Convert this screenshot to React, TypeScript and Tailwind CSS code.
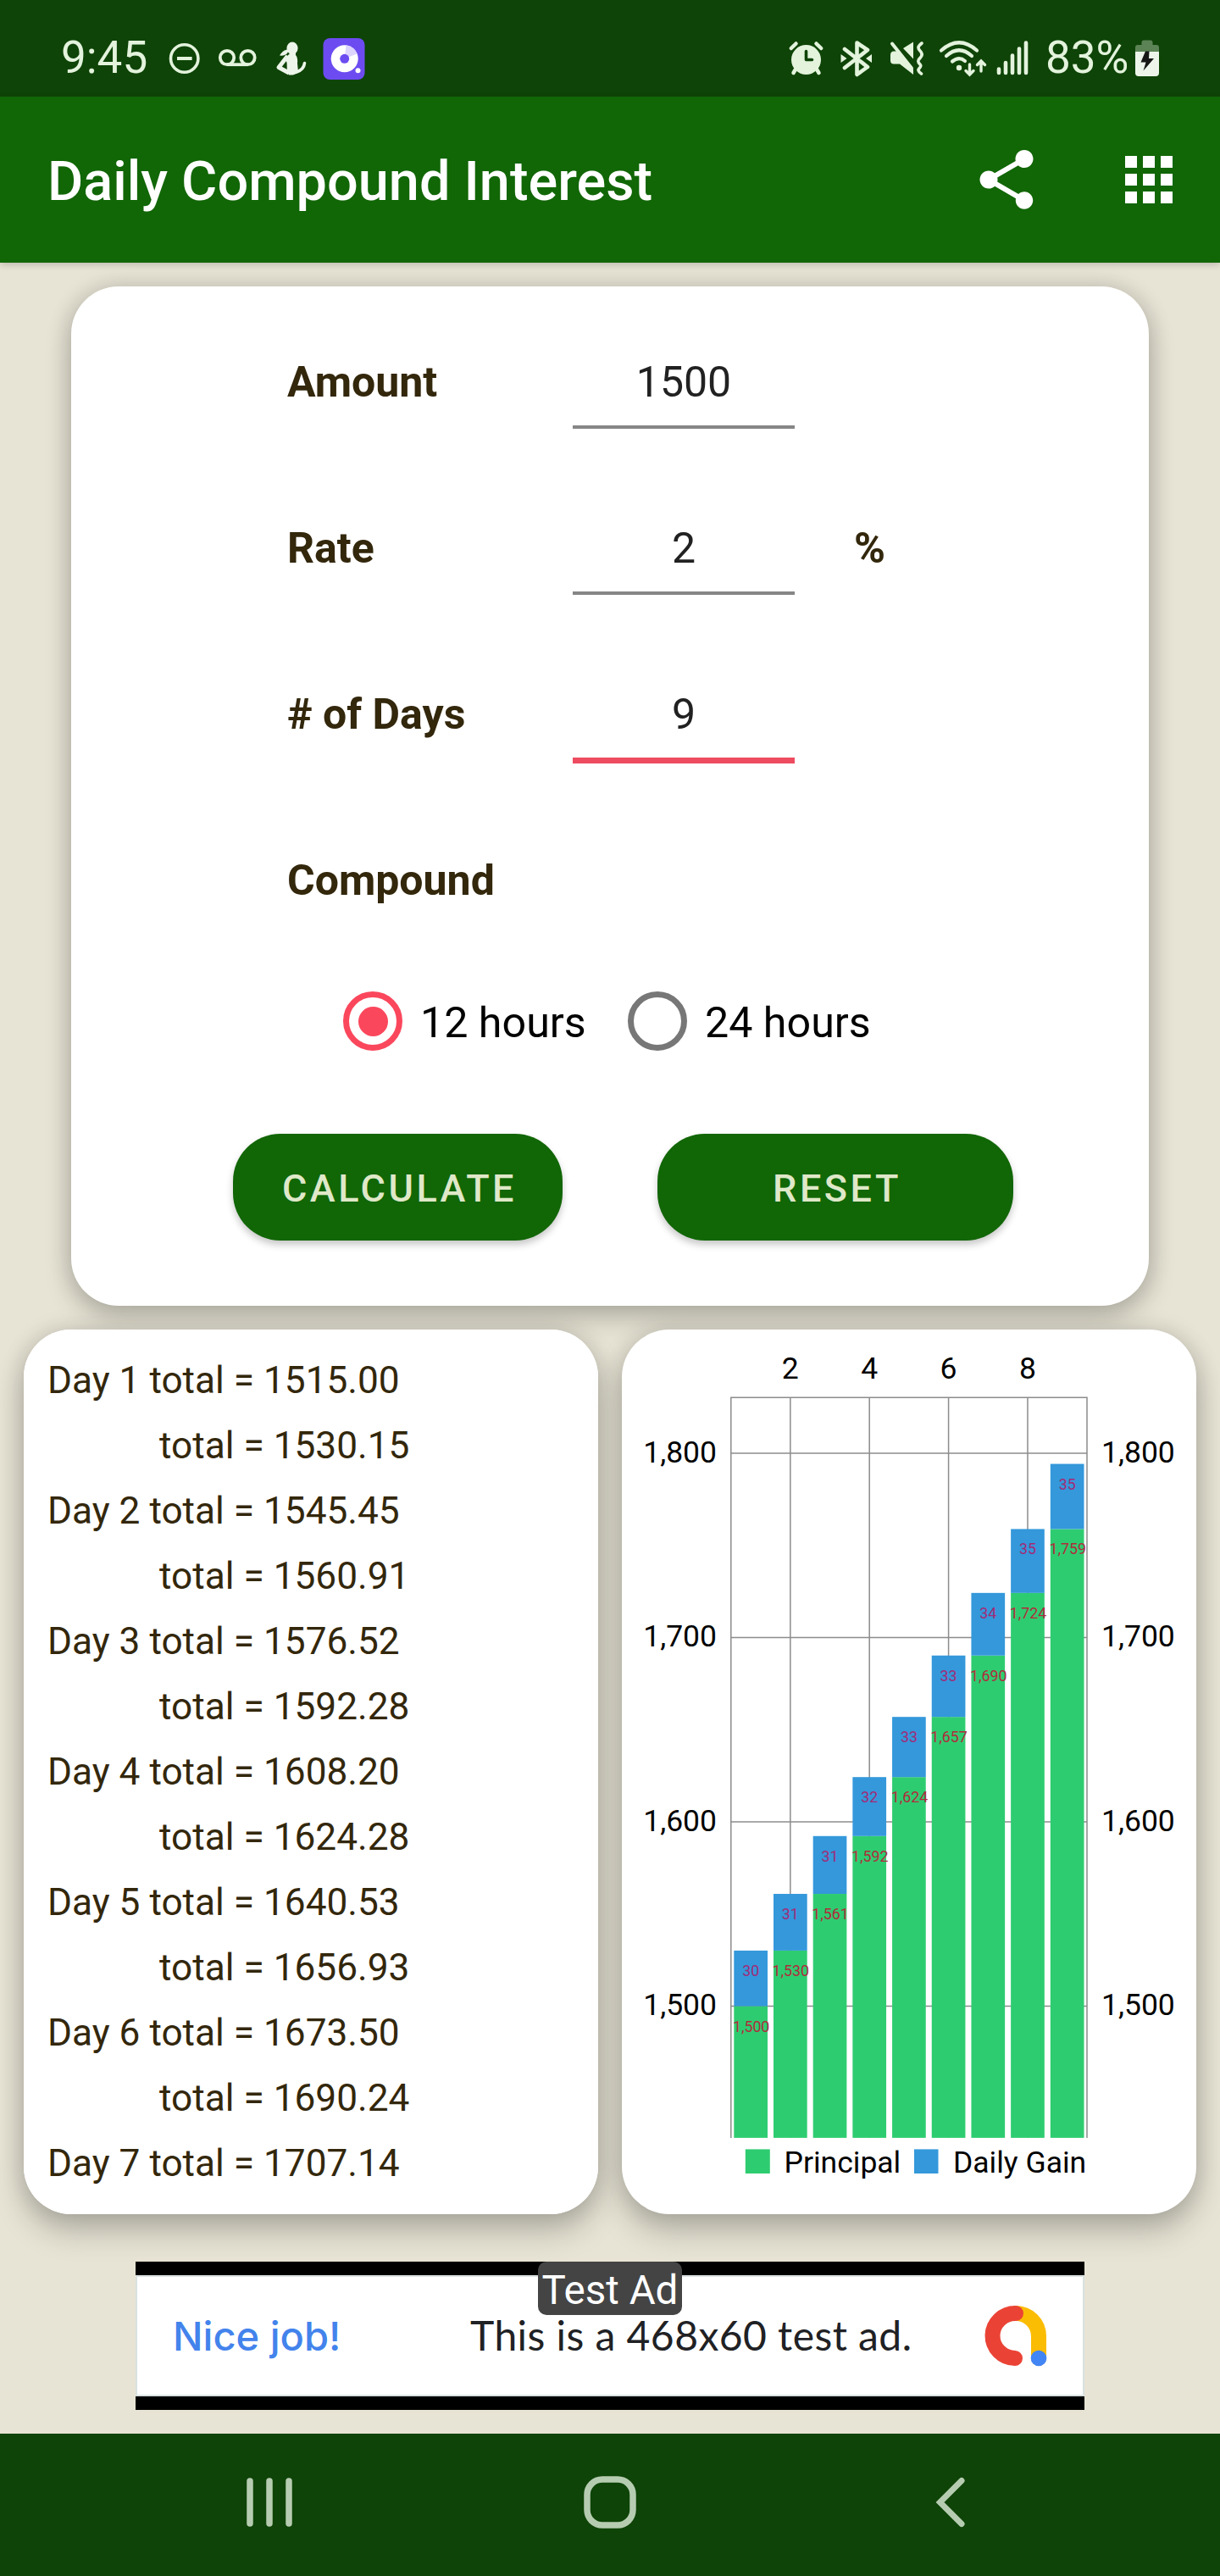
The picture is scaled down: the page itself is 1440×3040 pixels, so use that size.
import { MdApps, MdShare } from "react-icons/md";

const fields = [
  { label: "Amount", value: "1500", suffix: "", active: false },
  { label: "Rate", value: "2", suffix: "%", active: false },
  { label: "# of Days", value: "9", suffix: "", active: true },
];

const totals = [
  { day: 1, half: "1515.00", full: "1530.15" },
  { day: 2, half: "1545.45", full: "1560.91" },
  { day: 3, half: "1576.52", full: "1592.28" },
  { day: 4, half: "1608.20", full: "1624.28" },
  { day: 5, half: "1640.53", full: "1656.93" },
  { day: 6, half: "1673.50", full: "1690.24" },
  { day: 7, half: "1707.14", full: "" },
];

const bars = [
  { principal: 1500, gain: 30.15 },
  { principal: 1530.15, gain: 30.76 },
  { principal: 1560.91, gain: 31.37 },
  { principal: 1592.28, gain: 32.0 },
  { principal: 1624.28, gain: 32.65 },
  { principal: 1656.93, gain: 33.31 },
  { principal: 1690.24, gain: 33.97 },
  { principal: 1724.21, gain: 34.66 },
  { principal: 1758.87, gain: 35.35 },
];

/* Chart geometry */
const LEFT = 128.8;
const RIGHT = 549;
const TOP = 80.3;
const BOTTOM = 953.9;
const STEP = (RIGHT - LEFT) / bars.length;
const y = (value: number) => 798.5 - (value - 1500) * 2.175;
const fmt = (value: number) => Math.round(value).toLocaleString("en-US");

function StatusBar() {
  return (
    <div className="flex h-[114px] shrink-0 items-center justify-between bg-[#0e4407] px-[72px] pt-[22px] text-[53px] leading-none text-[#e3f3dc]">
      <div className="flex items-center">
        <span className="w-[127px]">9:45</span>
        {/* Do not disturb */}
        <svg width="38" height="60" viewBox="0 0 38 60" fill="none" stroke="currentColor">
          <circle cx="18.7" cy="31" r="16.2" strokeWidth="3.6" />
          <path d="M10 31H27.6" strokeWidth="4" />
        </svg>
        {/* Voicemail */}
        <svg className="ml-5" width="47" height="60" viewBox="0 0 47 60" fill="none" stroke="currentColor" strokeWidth="3.8">
          <circle cx="11" cy="30" r="8.2" />
          <circle cx="35.5" cy="30" r="8.2" />
          <path d="M11 38.2H35.5" />
        </svg>
        {/* Fitness app */}
        <svg className="ml-[21px]" width="38" height="60" viewBox="0 0 38 60" fill="#edf5ea">
          <ellipse cx="20" cy="18.8" rx="6.6" ry="7.2" />
          <path d="M17 20.5C11 20 8.5 22 5 27.5C9 28 12 27 13.5 25.5Z" />
          <path d="M16.5 22H24V27C26 29 26.5 33 26 37L27 47C24 50.5 20 50.8 16 50.5C13 47 14 40 13.5 36C12 32 13 28 16.500 26Z" />
          <path d="M14.5 28L4 41.5L16 48" fill="none" stroke="#edf5ea" strokeWidth="5" strokeLinejoin="round" />
          <path d="M25 47C31 45 34 41 34.5 36.5" fill="none" stroke="#edf5ea" strokeWidth="3.6" strokeLinecap="round" />
        </svg>
        {/* Music app */}
        <svg className="ml-[18px]" width="50" height="60" viewBox="0 0 50 60">
          <rect x="0.5" y="7" width="49" height="49" rx="8" fill="#6c4cf1" />
          <circle cx="25.7" cy="31.3" r="16" fill="#fff" />
          <path d="M25.7 31.3L27.5 15.4A16 16 0 0 1 40.5 25.5Z" fill="#ddd4ff" />
          <circle cx="25.7" cy="31.3" r="5.5" fill="#6c4cf1" />
          <circle cx="41.5" cy="45.3" r="3" fill="#fff" />
        </svg>
      </div>

      <div className="flex items-center">
        {/* Alarm */}
        <svg width="43" height="60" viewBox="0 0 43 60" fill="none" stroke="currentColor" strokeWidth="4.5" strokeLinecap="round">
          <path d="M3.8 19L9.500 13.5M39.2 19L33.5 13.5M9.5 43L6.5 48M33.5 43L36.5 48" />
          <circle cx="21.5" cy="32.5" r="17.5" fill="currentColor" stroke="none" />
          <path d="M21.5 22.5V32.5H28.5" stroke="#0e4407" strokeWidth="3.6" strokeLinejoin="round" />
        </svg>
        {/* Bluetooth */}
        <svg className="ml-[18px]" width="39" height="60" viewBox="0 0 39 60" fill="none" stroke="currentColor" strokeWidth="4.6" strokeLinecap="round" strokeLinejoin="round">
          <path d="M6 20L33 41L20.5 50V12.5L33 21L6 42" />
          <path d="M1.5 26L8.5 31L1.5 36ZM38 26L31 31L38 36Z" fill="currentColor" stroke="none" />
        </svg>
        {/* Muted, vibrating */}
        <svg className="ml-[19px]" width="41" height="60" viewBox="0 0 41 60" fill="none" stroke="currentColor" strokeWidth="4" strokeLinecap="round">
          <path d="M17 19L29 11.5V31.5ZM6 22.5H11L29 44V50L13 37.5H6Q2 37.5 2 33.5V27Q2 22.5 6 22.5Z" fill="currentColor" stroke="none" />
          <path d="M4 13.500L27 42.5" />
          <path d="M39 13C34 17 34 19 37 22C40 25 39.5 28 37 30.500C34 33 34 35 37 38C40 41 34 43 35 45C35.5 47 37 48 38.5 49" strokeWidth="3.6" />
        </svg>
        {/* Wi-Fi */}
        <svg className="ml-[18px]" width="57" height="60" viewBox="0 0 57 60" fill="none" stroke="currentColor" strokeWidth="4.2" strokeLinecap="round">
          <path d="M3 21.5Q24 3 45 21.5M9 28Q24 14.5 39 28M16 34.5Q24 28 31 34" />
          <circle cx="24" cy="42" r="3.2" fill="currentColor" stroke="none" />
          <path d="M36.5 38V49M32 45.5L36.5 50L41 45.5M50 46V35M45.5 38.5L50 34L54.5 38.5" strokeWidth="3.4" />
        </svg>
        {/* Signal */}
        <svg className="ml-[11px]" width="38" height="60" viewBox="0 0 38 60" stroke="currentColor" strokeWidth="4.6" strokeLinecap="round">
          <path d="M3 43.5V48M11 36V48M19 27.5V48M27 19.5V48M35 12.5V48" />
        </svg>
        <span className="ml-5 w-[106px]">83%</span>
        {/* Battery */}
        <svg width="28" height="60" viewBox="0 0 28 60">
          <path d="M7.5 12Q7.5 9.5 10 9.5H18Q20.5 9.5 20.5 12V15H25Q28 15 28 18V24H0V18Q0 15 3 15H7.5Z" fill="#5c8356" />
          <path d="M0 23H28V48Q28 52 24 52H4Q0 52 0 48Z" fill="#edf5ea" />
          <path d="M16.5 22.5H12L6.5 35.5H12.5L9.5 45.500L22 31H16Z" fill="#161616" />
        </svg>
      </div>
    </div>
  );
}

function AppBar() {
  return (
    <header className="flex h-[196px] shrink-0 items-center bg-[#116606] pl-[56px] text-white shadow-[0_2px_8px_rgba(0,0,0,0.2)]">
      <h1 className="pt-[4px] text-[64.8px] leading-none font-medium">Daily Compound Interest</h1>
      <MdShare className="ml-auto size-[84px]" />
      <MdApps className="ml-[84px] mr-[42px] size-[84px]" />
    </header>
  );
}

function Radio({ label, checked }: { label: string; checked: boolean }) {
  return (
    <div className="flex w-[336px] items-center gap-[21px]">
      <div
        className={
          checked
            ? "flex size-[70px] items-center justify-center rounded-full border-[7px] border-[#fb475c]"
            : "size-[70px] rounded-full border-[7px] border-[#777777]"
        }>
        {checked && <div className="size-[35px] rounded-full bg-[#fb475c]" />}
      </div>
      <span className="pt-[4px] text-[50.2px] leading-none text-black">{label}</span>
    </div>
  );
}

function FormCard() {
  return (
    <section className="mx-[84px] mt-7 h-[1203px] shrink-0 rounded-[56px] bg-white pt-[15px] shadow-[0_14px_32px_rgba(0,0,0,0.2),0_0_28px_rgba(0,0,0,0.14)]">
      {fields.map((field) => (
        <div key={field.label} className="flex h-[196px] items-center pl-[255px] text-[50px] leading-none">
          <span className="w-[337px] font-bold text-[#33270c]">{field.label}</span>
          <div
            className={
              field.active
                ? "flex h-[116px] w-[262px] items-center justify-center border-b-[7px] border-[#ee4b60] pt-[7px] text-[#212121]"
                : "flex h-[109px] w-[262px] items-center justify-center border-b-[4px] border-[#868686] pt-[4px] text-[#212121]"
            }>
            {field.value}
          </div>
          <span className="ml-[70px] font-bold text-[#33270c]">{field.suffix}</span>
        </div>
      ))}
      <div className="flex h-[196px] items-center pl-[255px] text-[50px] leading-none font-bold text-[#33270c]">
        Compound
      </div>

      <div className="flex h-[136px] items-center pl-[321px]">
        <Radio label="12 hours" checked />
        <Radio label="24 hours" checked={false} />
      </div>

      {/* Actions */}
      <div className="mt-[65px] flex gap-28 pl-[191px] text-[45px] leading-none font-medium tracking-[3.5px] text-[#dfe8c8]">
        <button className="h-[126px] w-[389px] rounded-[56px] bg-[#116606] pt-[3px] pl-[4px] shadow-[0_5px_9px_rgba(0,0,0,0.22)]">
          CALCULATE
        </button>
        <button className="h-[126px] w-[420px] rounded-[56px] bg-[#116606] pt-[3px] pl-[4px] shadow-[0_5px_9px_rgba(0,0,0,0.22)]">
          RESET
        </button>
      </div>
    </section>
  );
}

function TotalsCard() {
  return (
    <section className="h-[1044px] w-[678px] overflow-hidden rounded-[56px] bg-white pt-[22px] pl-7 text-[44.2px] leading-[77px] text-[#33270c]">
      {totals.map((row) => (
        <div key={row.day}>
          <p>Day {row.day} total = {row.half}</p>
          {row.full && <p className="pl-[132px]">total = {row.full}</p>}
        </div>
      ))}
    </section>
  );
}

function ChartCard() {
  return (
    <svg width="678" height="1044" viewBox="0 0 678 1044" fontSize="35.5">
      {/* Grid */}
      <g stroke="#8c8c8c" strokeWidth="1.5" fill="none">
        <path d={`M${LEFT} ${BOTTOM}V${TOP}H${RIGHT}V${BOTTOM}`} />
        {[1500, 1600, 1700, 1800].map((v) => (
          <path key={v} d={`M${LEFT} ${y(v)}H${RIGHT}`} />
        ))}
        {[2, 4, 6, 8].map((n) => (
          <path key={n} d={`M${LEFT + (n - 0.5) * STEP} ${TOP}V${BOTTOM}`} />
        ))}
      </g>

      {/* Axis labels */}
      {[2, 4, 6, 8].map((n) => (
        <text key={n} x={LEFT + (n - 0.5) * STEP} y="58" textAnchor="middle">{n}</text>
      ))}
      {[1500, 1600, 1700, 1800].map((v) => (
        <g key={v}>
          <text x="112" y={y(v) + 10.5} textAnchor="end">{fmt(v)}</text>
          <text x="566" y={y(v) + 10.5}>{fmt(v)}</text>
        </g>
      ))}

      {/* Stacked bars */}
      {bars.map((bar, i) => {
        const x = LEFT + i * STEP + STEP * 0.075;
        const mid = y(bar.principal);
        const top = y(bar.principal + bar.gain);
        return (
          <g key={i} fontSize="17.8" textAnchor="middle">
            <rect x={x} y={mid} width={STEP * 0.85} height={BOTTOM - mid} fill="#2ecc71" />
            <rect x={x} y={top} width={STEP * 0.85} height={mid - top} fill="#3498db" />
            <text x={x + STEP * 0.425} y={top + 30} fill="#a02c78">{fmt(bar.gain)}</text>
            <text x={x + STEP * 0.425 + 0.5} y={mid + 30} fill="#b02c3c">{fmt(bar.principal)}</text>
          </g>
        );
      })}

      {/* Legend */}
      <rect x="145.8" y="967.4" width="29" height="28.6" fill="#2ecc71" />
      <text x="191.5" y="995">Principal</text>
      <rect x="345" y="967.4" width="28.5" height="28.6" fill="#3498db" />
      <text x="391" y="995">Daily Gain</text>
    </svg>
  );
}

function AdBanner() {
  return (
    <div className="relative mx-auto mt-14 h-[175px] w-[1120px] shrink-0 bg-black py-4">
      <div className="flex h-[143px] items-center border-2 border-[#dae2e1] bg-white pl-[42px] leading-none">
        <span className="w-[351px] text-[47px] font-medium font-['Inter'] text-[#4383ec]">Nice job!</span>
        <span className="w-[606px] pb-[2px] text-[48px] tracking-[0.45px] font-['Lato'] text-[#202124]">
          This is a 468x60 test ad.
        </span>
        <svg width="76" height="78" viewBox="0 0 76 78" fill="none" strokeWidth="18" strokeLinecap="round">
          <path d="M38 12A27 27 0 0 1 65 39V65" stroke="#fbbc04" />
          <path d="M38 12A27 26.5 0 0 0 37 65" stroke="#ea4335" />
          <circle cx="65" cy="65" r="9.3" fill="#4285f4" />
        </svg>
      </div>
      <div className="absolute top-0 left-[475px] flex h-[63px] w-[170px] items-center justify-center rounded-[10px] bg-[#444444] pt-[6px] text-[47.5px] leading-none text-white">
        Test Ad
      </div>
    </div>
  );
}

function NavBar() {
  return (
    <nav className="mt-auto flex h-[168px] shrink-0 items-center justify-between bg-[#0e4407] px-[288px] pb-[6px] text-[#b6ccb1]">
      <svg className="overflow-visible" width="60" height="60" fill="none" stroke="currentColor" strokeWidth="7.5" strokeLinecap="round">
        <path d="M7 5V55M30 5V55M53 5V55" />
      </svg>
      <svg className="overflow-visible" width="60" height="60" fill="none" stroke="currentColor" strokeWidth="7.5">
        <rect x="3" y="3" width="54" height="54" rx="18" />
      </svg>
      <svg className="overflow-visible" width="60" height="60" fill="none" stroke="currentColor" strokeWidth="7" strokeLinecap="round">
        <path d="M43 4.5L17.5 30L43 55.5" />
      </svg>
    </nav>
  );
}

export default function App() {
  return (
    <div className="flex h-[3040px] w-[1440px] flex-col overflow-hidden bg-[#e7e4d5] font-['Roboto',sans-serif]">
      <StatusBar />
      <AppBar />
      <FormCard />
      <div className="mt-7 flex shrink-0 justify-between px-7">
        <div className="rounded-[56px] bg-white shadow-[0_20px_36px_rgba(0,0,0,0.22),0_0_28px_rgba(0,0,0,0.14)]">
          <TotalsCard />
        </div>
        <div className="rounded-[56px] bg-white shadow-[0_20px_36px_rgba(0,0,0,0.22),0_0_28px_rgba(0,0,0,0.14)]">
          <ChartCard />
        </div>
      </div>
      <AdBanner />
      <NavBar />
    </div>
  );
}
